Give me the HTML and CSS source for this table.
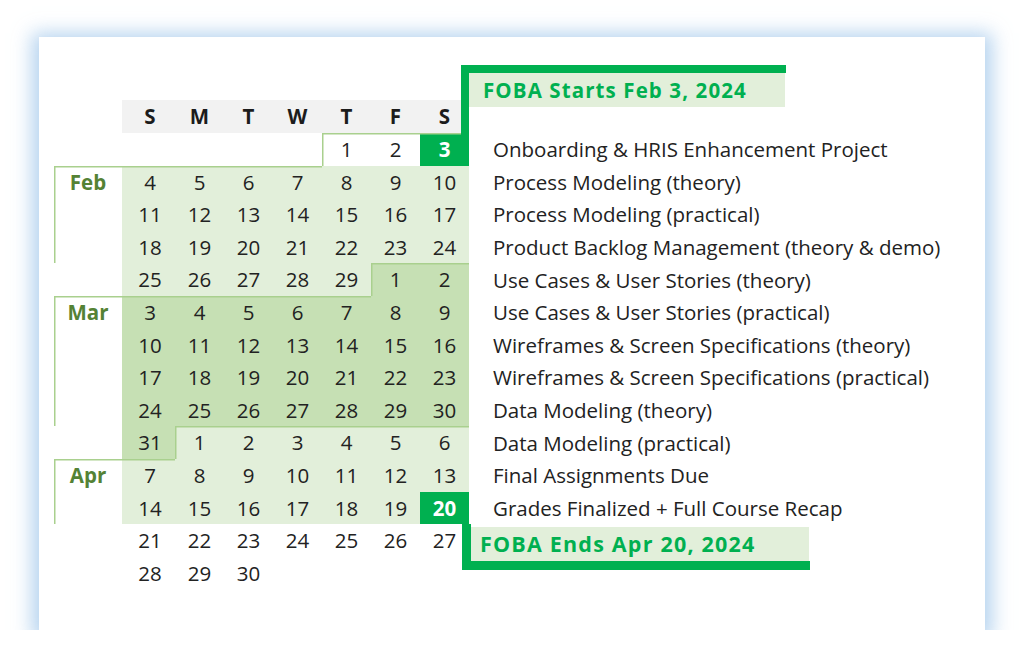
FILE: index.html
```html
<!DOCTYPE html>
<html>
<head>
<meta charset="utf-8">
<link rel="stylesheet" href="styles.css">
</head>
<body>
<div class="card">
  <div class="cal">
    <div class="c"></div>
    <div class="c hd first">S</div><div class="c hd">M</div><div class="c hd">T</div><div class="c hd">W</div><div class="c hd">T</div><div class="c hd">F</div><div class="c hd">S</div>
    <div class="c"></div>

    <div class="c"></div>
    <div class="c first"></div><div class="c"></div><div class="c"></div><div class="c"></div><div class="c btl">1</div><div class="c bt">2</div><div class="c hl bt">3</div>
    <div class="desc">Onboarding &amp; HRIS Enhancement Project</div>

    <div class="c mo btl">Feb</div>
    <div class="c lt bt first">4</div><div class="c lt bt">5</div><div class="c lt bt">6</div><div class="c lt bt">7</div><div class="c lt">8</div><div class="c lt">9</div><div class="c lt">10</div>
    <div class="desc">Process Modeling (theory)</div>

    <div class="c bl"></div>
    <div class="c lt first">11</div><div class="c lt">12</div><div class="c lt">13</div><div class="c lt">14</div><div class="c lt">15</div><div class="c lt">16</div><div class="c lt">17</div>
    <div class="desc">Process Modeling (practical)</div>

    <div class="c bl"></div>
    <div class="c lt first">18</div><div class="c lt">19</div><div class="c lt">20</div><div class="c lt">21</div><div class="c lt">22</div><div class="c lt">23</div><div class="c lt">24</div>
    <div class="desc">Product Backlog Management (theory &amp; demo)</div>

    <div class="c"></div>
    <div class="c lt first">25</div><div class="c lt">26</div><div class="c lt">27</div><div class="c lt">28</div><div class="c lt">29</div><div class="c dk btl">1</div><div class="c dk bt">2</div>
    <div class="desc">Use Cases &amp; User Stories (theory)</div>

    <div class="c mo btl">Mar</div>
    <div class="c dk bt first">3</div><div class="c dk bt">4</div><div class="c dk bt">5</div><div class="c dk bt">6</div><div class="c dk bt">7</div><div class="c dk">8</div><div class="c dk">9</div>
    <div class="desc">Use Cases &amp; User Stories (practical)</div>

    <div class="c bl"></div>
    <div class="c dk first">10</div><div class="c dk">11</div><div class="c dk">12</div><div class="c dk">13</div><div class="c dk">14</div><div class="c dk">15</div><div class="c dk">16</div>
    <div class="desc">Wireframes &amp; Screen Specifications (theory)</div>

    <div class="c bl"></div>
    <div class="c dk first">17</div><div class="c dk">18</div><div class="c dk">19</div><div class="c dk">20</div><div class="c dk">21</div><div class="c dk">22</div><div class="c dk">23</div>
    <div class="desc">Wireframes &amp; Screen Specifications (practical)</div>

    <div class="c bl"></div>
    <div class="c dk first">24</div><div class="c dk">25</div><div class="c dk">26</div><div class="c dk">27</div><div class="c dk">28</div><div class="c dk">29</div><div class="c dk">30</div>
    <div class="desc">Data Modeling (theory)</div>

    <div class="c"></div>
    <div class="c dk first">31</div><div class="c lt btl">1</div><div class="c lt bt">2</div><div class="c lt bt">3</div><div class="c lt bt">4</div><div class="c lt bt">5</div><div class="c lt bt">6</div>
    <div class="desc">Data Modeling (practical)</div>

    <div class="c mo btl">Apr</div>
    <div class="c lt bt first">7</div><div class="c lt">8</div><div class="c lt">9</div><div class="c lt">10</div><div class="c lt">11</div><div class="c lt">12</div><div class="c lt">13</div>
    <div class="desc">Final Assignments Due</div>

    <div class="c bl"></div>
    <div class="c lt first">14</div><div class="c lt">15</div><div class="c lt">16</div><div class="c lt">17</div><div class="c lt">18</div><div class="c lt">19</div><div class="c hl">20</div>
    <div class="desc">Grades Finalized + Full Course Recap</div>

    <div class="c"></div>
    <div class="c first">21</div><div class="c">22</div><div class="c">23</div><div class="c">24</div><div class="c">25</div><div class="c">26</div><div class="c">27</div>
    <div class="desc"></div>

    <div class="c"></div>
    <div class="c first">28</div><div class="c">29</div><div class="c">30</div><div class="c"></div><div class="c"></div><div class="c"></div><div class="c"></div>
    <div class="desc"></div>
  </div>

  <div class="flag flag-start"><div class="flag-label">FOBA Starts Feb 3, 2024</div></div>
  <div class="flag flag-end"><div class="flag-label">FOBA Ends Apr 20, 2024</div></div>
</div>
</body>
</html>
```

FILE: styles.css
```css
html, body {
  margin: 0;
  padding: 0;
  background: #ffffff;
}

body {
  font-family: "Open Sans", Lato, "Liberation Sans", sans-serif;
  color: #222222;
}

.card {
  position: relative;
  box-sizing: border-box;
  width: 946px;
  height: 593px;
  margin: 37px 0 0 39px;
  padding: 63px 0 0 15px;
  background: #ffffff;
  box-shadow: 0 3px 18px 7px rgba(150, 192, 232, 0.7);
}

.cal {
  display: grid;
  grid-template-columns: 68px 53px repeat(6, 49px) 1fr;
  grid-template-rows: 33px;
  grid-auto-rows: 32.6px;
}

.c {
  display: flex;
  align-items: center;
  justify-content: center;
  font-size: 20.5px;
  line-height: 1;
}

.c.first {
  padding-left: 3px;
}

.hd {
  background: #f2f2f2;
  font-weight: 700;
  color: #1c1c1c;
}

.lt { background: #e2efda; }
.dk { background: #c6e0b4; }

.hl {
  background: #00b050;
  color: #ffffff;
  font-weight: 700;
}

.bt { box-shadow: inset 0 1.5px 0 #a9d08e; }
.bl { box-shadow: inset 1.5px 0 0 #a9d08e; }
.btl { box-shadow: inset 0 1.5px 0 #a9d08e, inset 1.5px 0 0 #a9d08e; }

.mo {
  font-weight: 700;
  color: #548235;
}

.desc {
  display: flex;
  align-items: center;
  padding-left: 24px;
  font-size: 20.5px;
  white-space: nowrap;
  color: #222222;
}

.flag {
  position: absolute;
  box-sizing: border-box;
}

.flag-label {
  box-sizing: border-box;
  height: 34px;
  line-height: 34px;
  background: #e2efda;
  color: #00b050;
  font-weight: 700;
  font-size: 20.5px;
  letter-spacing: 1.1px;
  white-space: nowrap;
}

.flag-start {
  left: 422px;
  top: 28px;
  width: 325px;
  height: 100px;
  border-top: 8px solid #00b050;
  border-left: 8px solid #00b050;
}

.flag-start .flag-label {
  width: 316px;
  padding-left: 14px;
}

.flag-end {
  left: 423px;
  top: 487px;
  width: 348px;
  height: 46px;
  border-left: 9px solid #00b050;
  border-bottom: 9px solid #00b050;
}

.flag-end .flag-label {
  margin-top: 3px;
  width: 338px;
  padding-left: 9px;
  font-size: 21.5px;
  letter-spacing: 1.2px;
}
```
